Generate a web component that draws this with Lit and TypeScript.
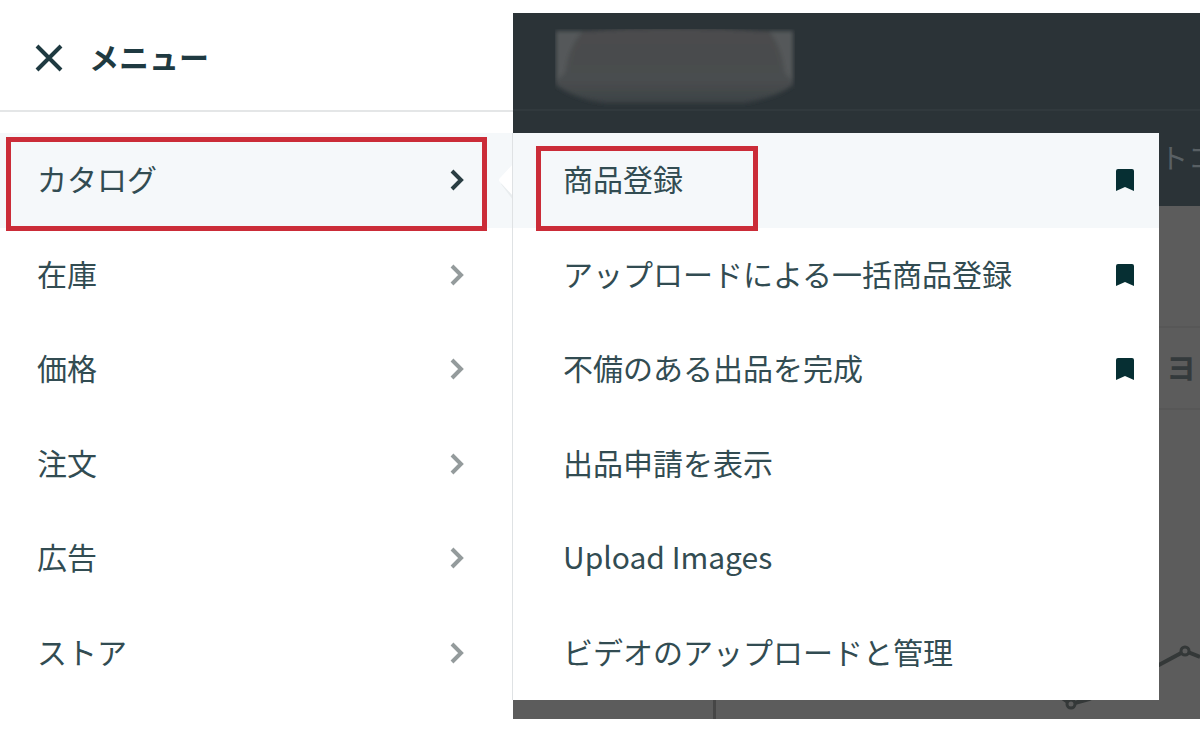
import { LitElement, html, css, nothing } from "lit";
import { customElement, property, state } from "lit/decorators.js";
import { classMap } from "lit/directives/class-map.js";

interface SubItem {
  label: string;
  saved: boolean;
}

const CATEGORIES = ["カタログ", "在庫", "価格", "注文", "広告", "ストア"];

const CATALOG_ITEMS: SubItem[] = [
  { label: "商品登録", saved: true },
  { label: "アップロードによる一括商品登録", saved: true },
  { label: "不備のある出品を完成", saved: true },
  { label: "出品申請を表示", saved: false },
  { label: "Upload Images", saved: false },
  { label: "ビデオのアップロードと管理", saved: false },
];

// Dimmed dashboard that stays visible behind the open menu.
@customElement("dimmed-page")
export class DimmedPage extends LitElement {
  static styles = css`
    :host {
      display: flex;
      flex-direction: column;
      height: 100%;
      overflow: hidden;
      background: #5c5c5c;
      color: #343a3c;
    }
    .masthead {
      box-sizing: border-box;
      height: 98px;
      flex: none;
      padding: 16px 42px 0;
      background: #2b3337;
      border-bottom: 2px solid #31393d;
    }
    .store {
      display: block;
      width: 240px;
      height: 78px;
    }
    .tabs {
      box-sizing: border-box;
      height: 95px;
      flex: none;
      display: flex;
      justify-content: flex-end;
      align-items: center;
      padding-bottom: 4px;
      background: #2b3337;
      color: #596064;
      font-size: 28px;
    }
    .tab {
      width: 40px;
      white-space: nowrap;
      overflow: hidden;
    }
    .heading {
      box-sizing: border-box;
      height: 84px;
      flex: none;
      margin: 120px 0 0;
      padding: 0 4px 4px 0;
      display: flex;
      justify-content: flex-end;
      align-items: center;
      border: solid #575757;
      border-width: 2px 0;
      font-size: 30px;
      font-weight: 700;
    }
    .panels {
      flex: 1;
      min-height: 0;
      display: flex;
      justify-content: flex-end;
      align-items: flex-end;
    }
    .chart {
      display: block;
      width: 484px;
      height: 100px;
      border-left: 3px solid #464646;
    }
  `;

  render() {
    return html`
      <div class="masthead">
        <svg class="store" viewBox="0 0 240 78" aria-hidden="true">
          <defs>
            <linearGradient id="smudge" x1="0" y1="0" x2="0" y2="1">
              <stop offset="0" stop-color="#4b4c4d" />
              <stop offset="0.7" stop-color="#4a4d4f" />
              <stop offset="1" stop-color="#3c4245" />
            </linearGradient>
            <filter id="soft" x="-5%" y="-10%" width="110%" height="120%">
              <feGaussianBlur stdDeviation="2" />
            </filter>
          </defs>
          <g filter="url(#soft)">
            <path
              d="M1 2H30Q120 -4 210 2H238V56Q222 68 190 74H50Q20 70 1 56Z"
              fill="url(#smudge)"
            />
            <path d="M1 2H28Q14 16 10 44L1 52ZM238 2H214Q226 16 230 44L238 52Z" fill="#55585a" />
          </g>
        </svg>
      </div>
      <div class="tabs"><span class="tab">トコ</span></div>
      <h2 class="heading">ヨ</h2>
      <div class="panels">
        <svg class="chart" viewBox="0 0 484 100" aria-hidden="true">
          <g fill="none" stroke="#343838" stroke-width="4">
            <path d="M345 78L355 85L373 80L441 47L469 32L484 38" />
            <circle cx="355" cy="85" r="4" fill="#5c5c5c" stroke-width="3" />
            <circle cx="469" cy="32" r="4" fill="#5c5c5c" stroke-width="3" />
          </g>
        </svg>
      </div>
    `;
  }
}

@customElement("menu-row")
export class MenuRow extends LitElement {
  @property() label = "";
  @property({ type: Boolean }) active = false;
  @property({ type: Boolean }) saved = false;
  @property({ type: Boolean }) sub = false;

  static styles = css`
    :host {
      display: block;
      min-height: 0;
    }
    .row {
      position: relative;
      box-sizing: border-box;
      width: 100%;
      height: 100%;
      display: flex;
      align-items: center;
      justify-content: space-between;
      padding: 0 48px 0 37px;
      border: 0;
      background: none;
      color: #324c52;
      font: inherit;
      text-align: left;
      text-decoration: none;
      cursor: pointer;
    }
    .sub {
      padding: 0 24px 0 50px;
    }
    .active {
      background: #f5f8fa;
    }
    .label {
      padding-bottom: 4px;
    }
    .mark {
      position: absolute;
      inset: 4px 26px -3px 6px;
      border: 5px solid #cb2c38;
      pointer-events: none;
    }
    .sub .mark {
      inset: 13px auto -3px 23px;
      width: 212px;
    }
    .notch {
      position: absolute;
      right: 0;
      top: 50%;
      width: 16px;
      height: 40px;
      margin-top: -18px;
    }
    .chevron {
      width: 16px;
      height: 24px;
      fill: none;
      stroke: #949b9c;
      stroke-width: 4;
    }
    .active .chevron {
      stroke: #2a3e43;
    }
    .saved {
      width: 20px;
      height: 24px;
      fill: #062f33;
    }
  `;

  render() {
    const classes = classMap({ row: true, active: this.active, sub: this.sub });
    const mark = this.active ? html`<span class="mark"></span>` : nothing;
    if (this.sub) {
      return html`<a class=${classes} href="#">
        <span class="label">${this.label}</span>
        ${this.saved
          ? html`<svg class="saved" viewBox="0 0 20 24" aria-hidden="true">
              <path d="M1 3Q1 1 3 1H17Q19 1 19 3V23L10 19L1 23Z" />
            </svg>`
          : nothing}
        ${mark}
      </a>`;
    }
    return html`<button class=${classes} type="button" aria-expanded=${this.active}>
      <span class="label">${this.label}</span>
      <svg class="chevron" viewBox="0 0 16 24" aria-hidden="true">
        <path d="M3 3L12 12L3 21" />
      </svg>
      ${mark}
      ${this.active
        ? html`<svg class="notch" viewBox="0 0 16 40" aria-hidden="true">
            <path d="M16 8L4 22L16 38Z" fill="#e9edef" />
            <path d="M16 2L3 16Q1 18 3 20L16 34Z" fill="#fff" />
          </svg>`
        : nothing}
    </button>`;
  }
}

@customElement("app-root")
export class AppRoot extends LitElement {
  @state() private open = 0;

  static styles = css`
    :host {
      display: flex;
      height: 100vh;
      min-height: 600px;
      overflow: hidden;
      background: #fff;
      font-family: "Noto Sans CJK JP", sans-serif;
      font-size: 30px;
      line-height: 40px;
    }
    .drawer {
      box-sizing: border-box;
      width: 513px;
      flex: none;
      display: flex;
      flex-direction: column;
      padding-bottom: 32px;
    }
    .title {
      box-sizing: border-box;
      height: 112px;
      flex: none;
      display: flex;
      align-items: center;
      gap: 26px;
      padding: 6px 35px 0;
      border-bottom: 2px solid #e4e6e7;
      color: #1f3a41;
    }
    .title h1 {
      margin: 0;
      padding-bottom: 4px;
      font-size: 30px;
      font-weight: 700;
    }
    .close {
      width: 28px;
      height: 28px;
      padding: 0;
      border: 0;
      background: none;
      color: inherit;
      cursor: pointer;
    }
    .close svg {
      display: block;
      fill: none;
      stroke: currentColor;
      stroke-width: 4;
    }
    .list {
      flex: 1;
      min-height: 0;
      display: grid;
      grid-auto-rows: 1fr;
    }
    .drawer .list {
      margin-top: 21px;
    }
    .stage {
      position: relative;
      flex: 1;
      min-width: 0;
      padding: 13px 0;
    }
    .flyout {
      position: absolute;
      inset: 133px 41px 32px 0;
      background: #fff;
      box-shadow: -1px 0 0 #dfe2e4;
    }
  `;

  render() {
    return html`
      <nav class="drawer" aria-label="メニュー">
        <header class="title">
          <button class="close" type="button" aria-label="閉じる">
            <svg width="28" height="28" viewBox="0 0 28 28" aria-hidden="true">
              <path d="M2 2L26 26M26 2L2 26" />
            </svg>
          </button>
          <h1>メニュー</h1>
        </header>
        <div class="list">
          ${CATEGORIES.map(
            (label, i) => html`<menu-row
              .label=${label}
              .active=${i === this.open}
              @click=${() => (this.open = i)}
            ></menu-row>`
          )}
        </div>
      </nav>
      <main class="stage">
        <dimmed-page></dimmed-page>
        <div class="flyout list">
          ${CATALOG_ITEMS.map(
            (item, i) => html`<menu-row
              sub
              .label=${item.label}
              .saved=${item.saved}
              .active=${i === 0}
            ></menu-row>`
          )}
        </div>
      </main>
    `;
  }
}
